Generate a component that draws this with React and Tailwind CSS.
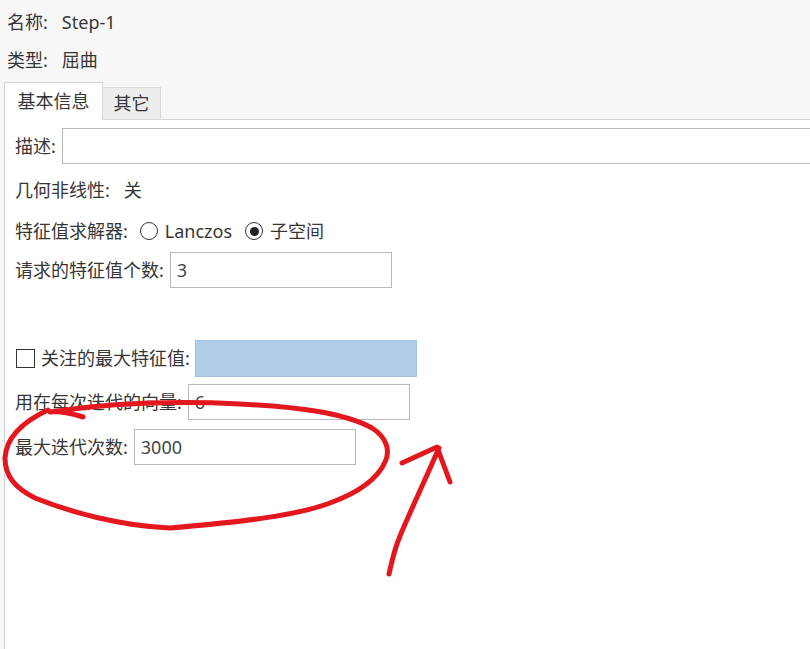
import React from 'react';

const font = { fontFamily: '"Noto Sans", "Noto Sans CJK SC", sans-serif' };

function Field({ label, value, width = 'w-[222px]', className = '' }) {
  return (
    <div className={`flex items-center ${className}`}>
      <span>{label}</span>
      <div className={`${width} h-[36px] ml-[6px] border border-[#b8b8b8] bg-white flex items-center px-[6px] text-[#444]`}>
        {value}
      </div>
    </div>
  );
}

function Radio({ checked, label, className = '' }) {
  return (
    <label className={`flex items-center ${className}`}>
      <span className="w-[18px] h-[18px] rounded-full border-[1.5px] border-[#333] flex items-center justify-center">
        {checked && <span className="w-[9px] h-[9px] rounded-full bg-[#222]" />}
      </span>
      <span className="ml-[7px]">{label}</span>
    </label>
  );
}

// 红色手绘标注
function Annotation() {
  return (
    <svg className="absolute left-0 top-0 pointer-events-none" width="810" height="649" viewBox="0 0 810 649" fill="none">
      <path
        d="M83 417 C70 413 60 411 50 412 C110 403 180 401 240 404 C300 407 345 413 372 428 C388 438 390 452 385 462 C378 478 360 492 330 503 C295 516 240 522 170 528 C120 526 70 512 35 498 C15 488 5 476 5 458 C6 440 18 424 48 410"
        stroke="#e3171d"
        strokeWidth="5"
        strokeLinecap="round"
        strokeLinejoin="round"
      />
      <path
        d="M389 574 C392 560 395 548 400 536 C410 512 425 480 439 448"
        stroke="#e3171d"
        strokeWidth="5"
        strokeLinecap="round"
      />
      <path
        d="M402 463 L437 447 L450 482"
        stroke="#e3171d"
        strokeWidth="5"
        strokeLinecap="round"
        strokeLinejoin="round"
      />
    </svg>
  );
}

export default function App() {
  return (
    <div className="relative w-[810px] h-[649px] overflow-hidden bg-[#f7f7f7] text-[18px] text-[#363636] flex flex-col" style={font}>
      <div className="pl-[7px] h-[44px] flex items-center">名称:&nbsp;&nbsp;&nbsp;Step-1</div>
      <div className="pl-[7px] h-[32px] flex items-center">类型:&nbsp;&nbsp;&nbsp;屈曲</div>

      {/* tabs */}
      <div className="flex items-end ml-[4px] mt-[7px] h-[37px] relative z-10 -mb-px">
        <div className="h-[38px] w-[99px] bg-white border border-b-0 border-[#d4d4d4] flex items-center justify-center">基本信息</div>
        <div className="h-[33px] w-[58px] bg-[#ededed] border border-l-0 border-[#d9d9d9] flex items-center justify-center">其它</div>
      </div>

      {/* panel */}
      <div className="flex-1 w-[860px] ml-[4px] bg-white border-l border-t border-[#d4d4d4] pl-[10px]">
        <Field label="描述:" value="" width="w-[800px]" className="mt-[8px]" />
        <div className="mt-[13px] h-[26px] flex items-center">几何非线性:&nbsp;&nbsp;&nbsp;关</div>
        <div className="mt-[15px] h-[26px] flex items-center">
          <span>特征值求解器:</span>
          <Radio label="Lanczos" className="ml-[12px]" />
          <Radio checked label="子空间" className="ml-[13px]" />
        </div>
        <Field label="请求的特征值个数:" value="3" className="mt-[8px]" />

        <div className="mt-[52px] flex items-center">
          <span className="w-[19px] h-[19px] border-[1.5px] border-[#333] ml-[1px]" />
          <span className="ml-[6px]">关注的最大特征值:</span>
          <div className="w-[222px] h-[37px] ml-[5px] bg-[#b0cdea] border border-[#a4c0dc]" />
        </div>
        <Field label="用在每次迭代的向量:" value="6" className="mt-[7px]" />
        <Field label="最大迭代次数:" value="3000" className="mt-[9px]" />
      </div>

      <Annotation />
    </div>
  );
}
